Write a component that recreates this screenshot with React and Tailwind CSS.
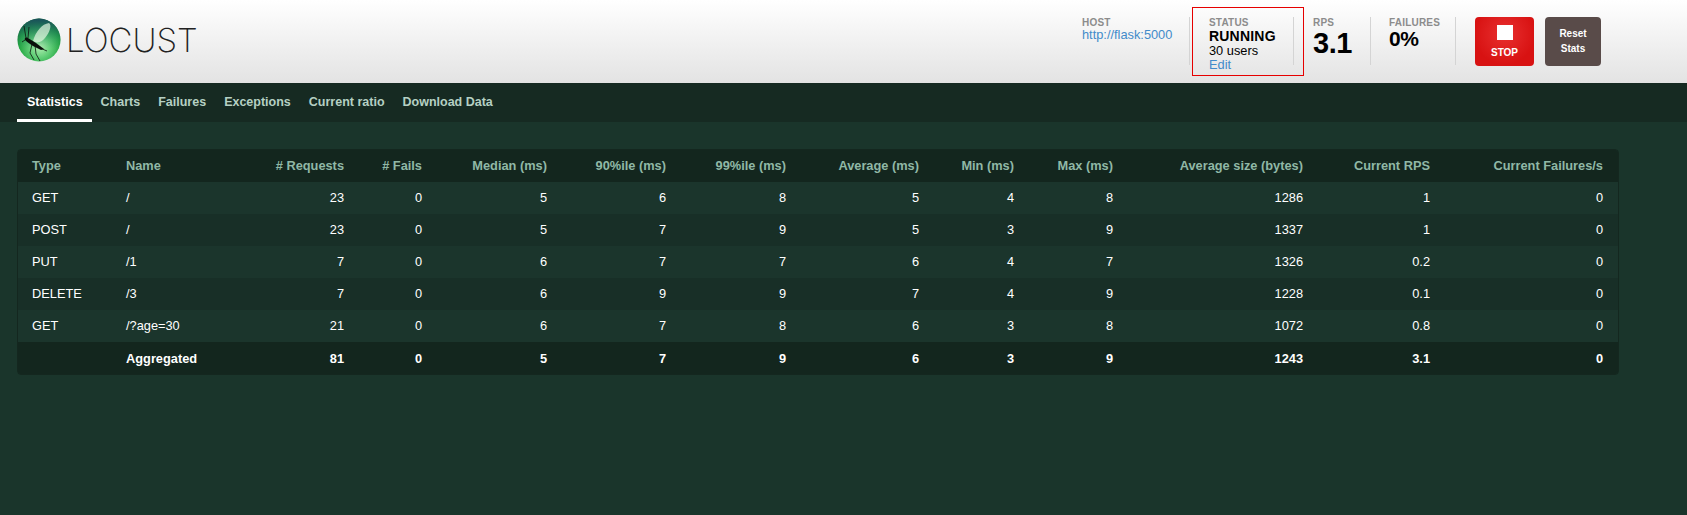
import React from "react";

const tabs = ["Statistics", "Charts", "Failures", "Exceptions", "Current ratio", "Download Data"];

const columns = [
  { label: "Type", width: "w-[94px]", left: true },
  { label: "Name", width: "w-[139px]", left: true },
  { label: "# Requests", width: "w-[107px]" },
  { label: "# Fails", width: "w-[78px]" },
  { label: "Median (ms)", width: "w-[125px]" },
  { label: "90%ile (ms)", width: "w-[119px]" },
  { label: "99%ile (ms)", width: "w-[120px]" },
  { label: "Average (ms)", width: "w-[133px]" },
  { label: "Min (ms)", width: "w-[95px]" },
  { label: "Max (ms)", width: "w-[99px]" },
  { label: "Average size (bytes)", width: "w-[190px]" },
  { label: "Current RPS", width: "w-[127px]" },
  { label: "Current Failures/s", width: "w-[174px]" },
];

const rows = [
  ["GET", "/", 23, 0, 5, 6, 8, 5, 4, 8, 1286, 1, 0],
  ["POST", "/", 23, 0, 5, 7, 9, 5, 3, 9, 1337, 1, 0],
  ["PUT", "/1", 7, 0, 6, 7, 7, 6, 4, 7, 1326, 0.2, 0],
  ["DELETE", "/3", 7, 0, 6, 9, 9, 7, 4, 9, 1228, 0.1, 0],
  ["GET", "/?age=30", 21, 0, 6, 7, 8, 6, 3, 8, 1072, 0.8, 0],
];

const totals = ["", "Aggregated", 81, 0, 5, 7, 9, 6, 3, 9, 1243, 3.1, 0];

function cellAlign(i) {
  if (i < 2) return "text-left pl-[14px]";
  return i === 12 ? "text-right pr-[15px]" : "text-right pr-[14px]";
}

function LocustLogo() {
  return (
    <svg width="46" height="46" viewBox="0 0 46 46" className="shrink-0">
      <defs>
        <radialGradient id="ball" cx="0.52" cy="0.66" r="0.62">
          <stop offset="0" stopColor="#b4eeb4" />
          <stop offset="0.4" stopColor="#62cf78" />
          <stop offset="0.78" stopColor="#22a540" />
          <stop offset="1" stopColor="#0e7229" />
        </radialGradient>
        <linearGradient id="top" x1="0" y1="0" x2="0" y2="1">
          <stop offset="0" stopColor="#1a4f5c" />
          <stop offset="0.5" stopColor="#2a8a6a" stopOpacity="0.25" />
          <stop offset="0.7" stopColor="#2a8a6a" stopOpacity="0" />
        </linearGradient>
      </defs>
      <circle cx="23" cy="23" r="21.5" fill="url(#ball)" />
      <circle cx="23" cy="23" r="21.5" fill="url(#top)" />
      <path d="M17 24C20 14 26 7 33 6C36 8 34 15 29 21C26 25 21 27 17 24Z" fill="#e6f7e2" opacity="0.7" />
      <path d="M9 23C8 21 10 20 12 21L20 26L28 32L25 33L17 29C14 27 11 25 9 23Z" fill="#0b0f0b" />
      <g stroke="#0b140d" strokeWidth="0.8" fill="none">
        <path d="M10 21L8 9" />
        <path d="M12 21L13 10" />
        <path d="M16 27L14 36L18 43" />
        <path d="M19 28L20 37L24 44" />
        <path d="M24 31L31 34" />
        <path d="M9 23L6 25" />
      </g>
    </svg>
  );
}

function Stat({ label, className, children }) {
  return (
    <div className={"h-[48px] border-r border-[#d4d4d4] " + className}>
      <div className="text-[10px] leading-[11px] font-bold text-[#8c8c8c] tracking-[0.2px]">{label}</div>
      {children}
    </div>
  );
}

export default function App() {
  return (
    <div className="min-h-screen bg-[#1a352b] font-['Liberation_Sans',Arial,sans-serif]">
      <header className="h-[83px] flex items-start bg-gradient-to-b from-white to-[#e3e3e3] pl-[16px] pr-[86px]">
        <div className="flex items-center mt-[17px]">
          <LocustLogo />
          <span className="ml-[4px] font-['Inter',sans-serif] font-extralight text-[33px] leading-none text-[#222]">LOCUST</span>
        </div>
        <div className="ml-auto flex items-start mt-[17px]">
          <Stat label="HOST" className="w-[108px]">
            <a className="block text-[12.8px] leading-[13px] text-[#428bca]">http://flask:5000</a>
          </Stat>
          <div className="relative">
            <Stat label="STATUS" className="w-[104px] pl-[19px]">
              <div className="mt-[1px] text-[14px] leading-[14px] font-bold text-black tracking-[0.2px]">RUNNING</div>
              <div className="text-[12.8px] leading-[15px] text-black">30 users</div>
              <a className="block text-[12.8px] leading-[13px] text-[#428bca]">Edit</a>
            </Stat>
            <div className="absolute left-[2px] top-[-10px] w-[112px] h-[69px] border border-[#e60000]"></div>
          </div>
          <Stat label="RPS" className="w-[77px] pl-[19px]">
            <div className="text-[29px] leading-[30px] font-bold text-black tracking-[-0.5px]">3.1</div>
          </Stat>
          <Stat label="FAILURES" className="w-[85px] pl-[18px]">
            <div className="text-[21px] leading-[22px] font-bold text-black tracking-[-0.5px]">0%</div>
          </Stat>
          <button className="ml-[19px] w-[59px] h-[49px] rounded-[4px] bg-[radial-gradient(circle_at_50%_35%,#e83030,#d81212_70%)] flex flex-col items-center text-white">
            <span className="mt-[8px] w-[16px] h-[15px] bg-white"></span>
            <span className="mt-[7px] text-[10px] leading-[12px] font-bold">STOP</span>
          </button>
          <button className="ml-[11px] w-[56px] h-[49px] pb-[2px] rounded-[4px] bg-[#594b49] text-white text-[10px] leading-[15px] font-bold">
            Reset
            <br />
            Stats
          </button>
        </div>
      </header>

      <nav className="h-[39px] bg-[#162a22] flex pl-[17px]">
        {tabs.map((tab, i) => (
          <a
            key={tab}
            className={
              "h-[39px] pt-[10px] text-[12.5px] leading-[18px] font-bold border-b-[3px] " +
              (i === 0 ? "pl-[10px] pr-[9px] text-white border-white" : "px-[9px] text-[#b5d0c3] border-transparent")
            }
          >
            {tab}
          </a>
        ))}
      </nav>

      <main className="pt-[27px] pl-[17px]">
        <div className="w-[1602px] rounded-[4px] overflow-hidden border border-[#14271f]">
          <table className="table-fixed w-full text-[12.8px] text-white">
            <colgroup>
              {columns.map((col) => (
                <col key={col.label} className={col.width} />
              ))}
            </colgroup>
            <thead>
              <tr className="h-[32px] bg-[#13261e]">
                {columns.map((col, i) => (
                  <th key={col.label} className={"pb-[1px] font-bold text-[#90b8a6] whitespace-nowrap " + cellAlign(i)}>
                    {col.label}
                  </th>
                ))}
              </tr>
            </thead>
            <tbody>
              {rows.map((row, r) => (
                <tr key={r} className={"h-[32px] " + (r % 2 === 0 ? "bg-[#1b352c]" : "bg-[#182f27]")}>
                  {row.map((val, i) => (
                    <td key={i} className={cellAlign(i)}>
                      {val}
                    </td>
                  ))}
                </tr>
              ))}
            </tbody>
            <tfoot>
              <tr className="h-[32px] bg-[#13261e] font-bold">
                {totals.map((val, i) => (
                  <td key={i} className={"pt-[1px] " + cellAlign(i)}>
                    {val}
                  </td>
                ))}
              </tr>
            </tfoot>
          </table>
        </div>
      </main>
    </div>
  );
}
